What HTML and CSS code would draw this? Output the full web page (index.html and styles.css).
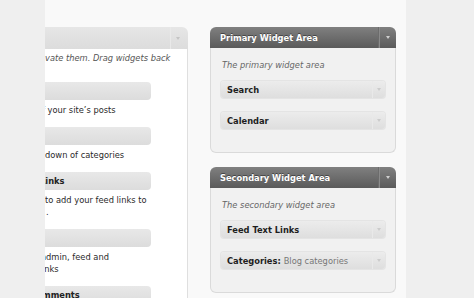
FILE: index.html
```html
<!DOCTYPE html>
<html>
<head>
<meta charset="utf-8">
<link rel="stylesheet" href="styles.css">
</head>
<body>
<div class="menu"></div>
<div class="main">
  <div class="avail">
    <div class="avail-head"><span class="sep-light"></span><span class="tri tri-light"></span></div>
    <div class="avail-body">
      <p class="avail-desc">vate them. Drag widgets back</p>
      <div class="lw"><div class="lw-bar"></div><p class="lw-desc"><span class="cut-f">f</span> your site’s posts</p></div>
      <div class="lw"><div class="lw-bar"></div><p class="lw-desc">down of categories</p></div>
      <div class="lw"><div class="lw-bar"><span class="cut-l">Links</span></div><p class="lw-desc">to add your feed links to<br><span class="dot">.</span></p></div>
      <div class="lw"><div class="lw-bar"></div><p class="lw-desc"><span class="cut-a">admin, feed and</span><br><span class="cut-i">inks</span></p></div>
      <div class="lw"><div class="lw-bar"><span class="cut-m">mments</span></div></div>
    </div>
  </div>
  <div class="sidebars">
    <div class="sb">
      <div class="sb-head"><span class="sb-title">Primary Widget Area</span><span class="sb-toggle"><span class="tri tri-head"></span></span></div>
      <div class="sb-body">
        <p class="sb-desc">The primary widget area</p>
        <div class="wb"><span class="wb-title">Search</span><span class="wb-toggle"><span class="tri tri-bar"></span></span></div>
        <div class="wb"><span class="wb-title">Calendar</span><span class="wb-toggle"><span class="tri tri-bar"></span></span></div>
      </div>
    </div>
    <div class="sb sb-second">
      <div class="sb-head"><span class="sb-title">Secondary Widget Area</span><span class="sb-toggle"><span class="tri tri-head"></span></span></div>
      <div class="sb-body">
        <p class="sb-desc">The secondary widget area</p>
        <div class="wb"><span class="wb-title">Feed Text Links</span><span class="wb-toggle"><span class="tri tri-bar"></span></span></div>
        <div class="wb"><span class="wb-title">Categories: <span class="in-title">Blog categories</span></span><span class="wb-toggle"><span class="tri tri-bar"></span></span></div>
      </div>
    </div>
  </div>
</div>
<div class="side"></div>
</body>
</html>
```
FILE: styles.css
```css
html, body {
  margin: 0;
  padding: 0;
}
body {
  width: 474px;
  height: 298px;
  overflow: hidden;
  display: flex;
  font-family: "DejaVu Sans", Verdana, sans-serif;
  font-size: 8.3px;
  color: #2a2a2a;
}
.menu {
  width: 45px;
  flex: none;
  background: #efefef;
}
.main {
  width: 361px;
  flex: none;
  background: #f9f9f9;
  display: flex;
  align-items: flex-start;
  padding-top: 27px;
  box-sizing: border-box;
}
.side {
  flex: 1;
  background: #efefef;
}

/* available widgets (clipped on the left) */
.avail {
  width: 143px;
  height: 271px;
  flex: none;
  display: flex;
  flex-direction: column;
}
.avail-head {
  height: 22px;
  flex: none;
  background: linear-gradient(#e6e6e6, #dcdcdc);
  border-top-right-radius: 6px;
  display: flex;
  align-items: center;
  justify-content: flex-end;
  padding-right: 8px;
}
.sep-light {
  width: 1px;
  height: 22px;
  background: #e9e9e9;
  margin-right: 5px;
}
.avail-body {
  flex: 1;
  background: #fff;
  border-right: 1px solid #dfdfdf;
  padding-top: 3px;
  overflow: hidden;
}
.avail-desc {
  margin: 0 0 18px;
  line-height: 12px;
  font-style: italic;
  color: #555;
  white-space: nowrap;
}
.lw-bar {
  width: 106px;
  height: 18px;
  background: linear-gradient(#e8e8e8, #dcdcdc);
  border-radius: 0 4px 4px 0;
  font-weight: bold;
  line-height: 18px;
  color: #222;
  white-space: nowrap;
  overflow: hidden;
}
.lw-desc {
  margin: 4px 0 11px;
  line-height: 12px;
  color: #2a2a2a;
  white-space: nowrap;
}
.dot { padding-left: 1px; }
.cut-f { margin-left: -3px; }
.cut-l { margin-left: -5px; display: inline-block; }
.cut-a { margin-left: -4px; display: inline-block; }
.cut-i { margin-left: -3px; display: inline-block; }
.cut-m { margin-left: -3px; display: inline-block; }

/* sidebars */
.sidebars {
  width: 186px;
  margin-left: 22px;
  flex: none;
}
.sb-second {
  margin-top: 14px;
}
.sb-head {
  height: 21px;
  background: linear-gradient(#808080, #5a5a5a);
  border-radius: 6px 6px 0 0;
  display: flex;
  align-items: center;
}
.sb-title {
  padding-left: 10px;
  color: #fff;
  font-weight: bold;
  text-shadow: 0 -1px 0 #444;
  white-space: nowrap;
}
.sb-toggle {
  margin-left: auto;
  width: 17px;
  height: 21px;
  border-left: 1px solid #6c6c6c;
  box-shadow: inset 1px 0 0 #8a8a8a;
  display: flex;
  align-items: center;
  justify-content: center;
}
.sb-body {
  background: #f1f1f1;
  border: 1px solid #dadada;
  border-top: none;
  border-radius: 0 0 6px 6px;
  padding: 11px 10px 23px;
}
.sb-desc {
  margin: 0 0 10px 1px;
  line-height: 12px;
  font-style: italic;
  color: #666;
}
.wb {
  height: 17px;
  background: linear-gradient(#ececec, #dedede);
  border-radius: 3px;
  display: flex;
  align-items: center;
  box-shadow: 0 0 0 1px #e4e4e4;
}
.wb + .wb {
  margin-top: 14px;
}
.wb-title {
  padding-left: 6px;
  font-weight: bold;
  color: #1e1e1e;
  white-space: nowrap;
}
.in-title {
  font-weight: normal;
  color: #777;
}
.wb-toggle {
  margin-left: auto;
  width: 12px;
  height: 17px;
  border-left: 1px solid #e9e9e9;
  display: flex;
  align-items: center;
  justify-content: center;
}

/* triangles */
.tri {
  width: 0;
  height: 0;
  border-left: 2.5px solid transparent;
  border-right: 2.5px solid transparent;
  border-top: 3px solid #bbb;
}
.tri-light { border-top-color: #c4c4c4; }
.tri-head { border-top-color: #cfcfcf; }
.tri-bar { border-top-color: #cccccc; }
```
